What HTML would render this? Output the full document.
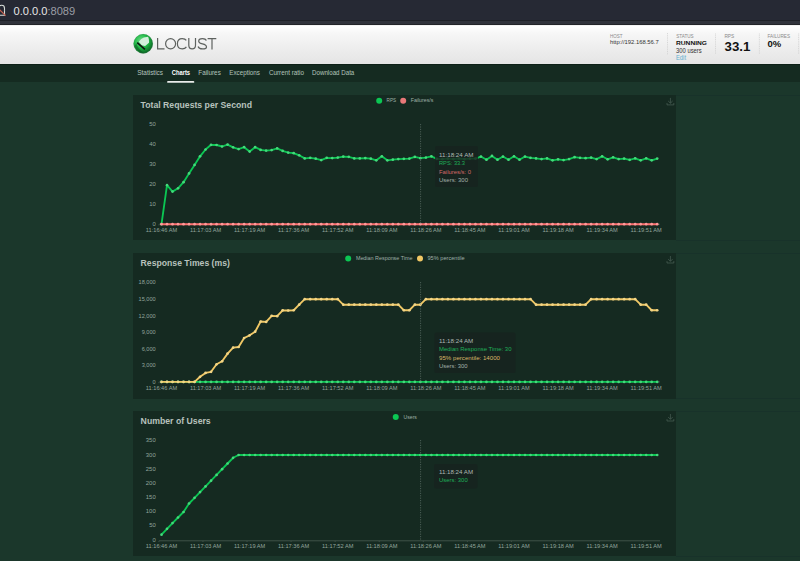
<!DOCTYPE html>
<html><head><meta charset="utf-8"><title>Locust</title><style>
*{margin:0;padding:0;box-sizing:border-box}
html,body{width:800px;height:561px;overflow:hidden;background:#1b372b;font-family:"Liberation Sans",sans-serif}
.abs{position:absolute}
#bar{left:0;top:0;width:800px;height:20px;background:#262934}
#bline{left:0;top:20px;width:800px;height:1px;background:#1f2128}
#band{left:0;top:21px;width:800px;height:3px;background:#31333c}
#bline2{left:0;top:24px;width:800px;height:1px;background:#232429}
#hdr{left:0;top:25px;width:800px;height:39px;background:linear-gradient(#ededed 0px,#ffffff 1.5px,#f7f7f7 20%,#ebebeb 70%,#e5e5e5 100%)}
#hline{left:0;top:64px;width:800px;height:1px;background:#0e2118}
#nav{left:0;top:65px;width:800px;height:17px;background:#152b21}
.panel{left:133px;width:543px;background:#152a21}
svg{position:absolute;left:0;top:0}
</style></head>
<body>
<div id="bar" class="abs"></div>
<div id="bline" class="abs"></div><div id="band" class="abs"></div><div id="bline2" class="abs"></div>
<div id="hdr" class="abs"></div>
<div id="hline" class="abs"></div>
<div id="nav" class="abs"></div>
<div class="abs panel" style="top:95px;height:145px"></div>
<div class="abs" style="left:676px;top:95px;width:124px;height:1px;background:#18322a"></div><div class="abs" style="left:676px;top:240px;width:124px;height:1px;background:#18322a"></div><div class="abs" style="left:676px;top:253px;width:124px;height:1px;background:#18322a"></div><div class="abs" style="left:676px;top:398px;width:124px;height:1px;background:#18322a"></div><div class="abs" style="left:676px;top:411px;width:124px;height:1px;background:#18322a"></div><div class="abs" style="left:676px;top:556px;width:124px;height:1px;background:#18322a"></div>
<div class="abs panel" style="top:253px;height:145.5px"></div>
<div class="abs panel" style="top:411px;height:145px"></div>
<svg width="800" height="561" viewBox="0 0 800 561" font-family="Liberation Sans, sans-serif">
 <!-- browser bar -->
 <g>
  <path d="M-1.3 8.2 a2.9 2.9 0 0 1 5.8 0 v2.6" stroke="#d6dcd8" stroke-width="1.1" fill="none"/>
  <path d="M4.5 10.5 V15.3 H-1" stroke="#d6dcd8" stroke-width="1.1" fill="none"/>
  <path d="M-0.5 9.6 L5.6 15.6" stroke="#c9604f" stroke-width="1.2"/>
  <text x="13.5" y="14.8" font-size="11.1" fill="#e6e6e6">0.0.0.0<tspan fill="#9a9da4">:8089</tspan></text>
 </g>
 <!-- logo -->
 <defs>
  <radialGradient id="lg" cx="0.4" cy="0.35" r="0.7">
   <stop offset="0" stop-color="#6fdc8a"/><stop offset="0.5" stop-color="#1fba45"/><stop offset="1" stop-color="#0a5a20"/>
  </radialGradient>
 </defs>
 <circle cx="143.2" cy="43.75" r="9.7" fill="url(#lg)"/>
 <circle cx="143.2" cy="43.75" r="9.45" fill="none" stroke="#3b7f55" stroke-width="0.5" stroke-opacity="0.6"/>
 <path d="M134.5 46 C136 50 139.5 52.5 143.5 53 C140 50 137.5 47.5 136.3 43.5 Z" fill="#0b4a1c" fill-opacity="0.45"/>
 <path d="M138.9 41.8 C140.5 39.8 142 38.2 143.8 37.6 L148.1 36.7 C148.9 38.5 149.2 40.6 149 42.7 L145.1 46.1 L141.7 45.2 Z" fill="#d3efdb"/>
 <path d="M137.2 42.6 L144.9 49.3" stroke="#101010" stroke-width="1.6"/>
 <g stroke="#5e625f" stroke-width="1.2" fill="none" stroke-linecap="butt">
  <path d="M157.6 38.1 V48.8 H164.5"/>
  <ellipse cx="170.6" cy="43.75" rx="5" ry="5.15"/>
  <path d="M186.3 40.4 C185.4 38.9 184 38.6 182.2 38.6 C179.1 38.6 177.4 40.9 177.4 43.8 C177.4 46.8 179.1 48.9 182.2 48.9 C184 48.9 185.5 48.3 186.4 46.9"/>
  <path d="M188.8 38.1 V45.3 C188.8 47.8 190.2 48.9 192.15 48.9 C194.1 48.9 195.5 47.8 195.5 45.3 V38.1"/>
  <path d="M206.3 40.6 C205.8 39.2 204.3 38.6 202.4 38.6 C200.1 38.6 198.7 39.7 198.7 41.2 C198.7 43.1 200.6 43.5 202.5 43.9 C204.8 44.4 206.5 45 206.5 46.9 C206.5 48.3 205 48.9 202.5 48.9 C200.3 48.9 198.6 48.2 198.1 46.5"/>
  <path d="M207.6 38.7 H216.3 M212 38.7 V49.4"/>
 </g>
 <!-- header stats -->
 <g fill="#8a8a8a" font-size="4.6">
  <text x="610" y="37.8" textLength="12.5" lengthAdjust="spacingAndGlyphs">HOST</text>
  <text x="676.2" y="37.8" textLength="17.4" lengthAdjust="spacingAndGlyphs">STATUS</text>
  <text x="724.4" y="37.8" textLength="9.8" lengthAdjust="spacingAndGlyphs">RPS</text>
  <text x="767.5" y="37.8" textLength="22.5" lengthAdjust="spacingAndGlyphs">FAILURES</text>
 </g>
 <text x="610" y="44.4" font-size="6.1" fill="#333" textLength="48.7" lengthAdjust="spacingAndGlyphs">http://192.168.56.7</text>
 <text x="676" y="45" font-size="6" font-weight="bold" fill="#111" textLength="31" lengthAdjust="spacingAndGlyphs">RUNNING</text>
 <text x="676" y="52.5" font-size="6.3" fill="#333" textLength="25.7" lengthAdjust="spacingAndGlyphs">300 users</text>
 <text x="676" y="59.5" font-size="6.3" fill="#64b0cf" textLength="10" lengthAdjust="spacingAndGlyphs">Edit</text>
 <text x="724.6" y="50.8" font-size="12.6" font-weight="bold" fill="#111" textLength="25.8" lengthAdjust="spacingAndGlyphs">33.1</text>
 <text x="767.6" y="47.2" font-size="9.1" font-weight="bold" fill="#111" textLength="13.7" lengthAdjust="spacingAndGlyphs">0%</text>
 <g stroke="#cfcfcf" stroke-width="0.8" stroke-dasharray="1 0.8">
  <line x1="667.5" y1="33" x2="667.5" y2="55"/>
  <line x1="715.5" y1="33.5" x2="715.5" y2="54"/>
  <line x1="759.4" y1="33.5" x2="759.4" y2="54"/>
  <line x1="798.6" y1="33.5" x2="798.6" y2="54"/>
 </g>
 <!-- nav -->
 <g font-size="6.35" fill="#b3c3bc">
  <text x="137.2" y="75.2" textLength="25.9" lengthAdjust="spacingAndGlyphs">Statistics</text>
  <text x="171.7" y="75.2" font-weight="bold" font-size="6.6" fill="#ffffff" textLength="18.4" lengthAdjust="spacingAndGlyphs">Charts</text>
  <text x="198.3" y="75.2" textLength="22.5" lengthAdjust="spacingAndGlyphs">Failures</text>
  <text x="229.2" y="75.2" textLength="30.8" lengthAdjust="spacingAndGlyphs">Exceptions</text>
  <text x="268.9" y="75.2" textLength="35.1" lengthAdjust="spacingAndGlyphs">Current ratio</text>
  <text x="312" y="75.2" textLength="42.3" lengthAdjust="spacingAndGlyphs">Download Data</text>
 </g>
 <rect x="167.1" y="81" width="27.2" height="1.8" rx="0.9" fill="#e9ecea"/>

 <!-- chart 1 -->
 <text x="140.5" y="108" font-size="8.3" font-weight="bold" fill="#b8c2bd" textLength="111.5" lengthAdjust="spacingAndGlyphs">Total Requests per Second</text>
 <circle cx="379.2" cy="100.7" r="3" fill="#0bc653"/>
 <text x="386.6" y="102.2" font-size="5.2" fill="#9fb0a8" textLength="9.6" lengthAdjust="spacingAndGlyphs">RPS</text>
 <circle cx="403.2" cy="100.7" r="3" fill="#e87878"/>
 <text x="410.7" y="102.2" font-size="5.2" fill="#9fb0a8" textLength="22.7" lengthAdjust="spacingAndGlyphs">Failures/s</text>
 <g font-size="5.9" fill="#93a59d">
 <text x="155.7" y="126.40" text-anchor="end">50</text><text x="155.7" y="146.30" text-anchor="end">40</text><text x="155.7" y="166.30" text-anchor="end">30</text><text x="155.7" y="186.30" text-anchor="end">20</text><text x="155.7" y="206.30" text-anchor="end">10</text><text x="155.7" y="226.30" text-anchor="end">0</text>
 <g font-size="5.65"><text x="161.50" y="231.5" text-anchor="middle">11:16:46 AM</text><text x="205.56" y="231.5" text-anchor="middle">11:17:03 AM</text><text x="249.62" y="231.5" text-anchor="middle">11:17:19 AM</text><text x="293.69" y="231.5" text-anchor="middle">11:17:36 AM</text><text x="337.75" y="231.5" text-anchor="middle">11:17:52 AM</text><text x="381.81" y="231.5" text-anchor="middle">11:18:09 AM</text><text x="425.87" y="231.5" text-anchor="middle">11:18:26 AM</text><text x="469.94" y="231.5" text-anchor="middle">11:18:45 AM</text><text x="514.00" y="231.5" text-anchor="middle">11:19:01 AM</text><text x="558.06" y="231.5" text-anchor="middle">11:19:18 AM</text><text x="602.12" y="231.5" text-anchor="middle">11:19:34 AM</text><text x="646.18" y="231.5" text-anchor="middle">11:19:51 AM</text></g>
 </g>
 <line x1="159" y1="224.2" x2="660" y2="224.2" stroke="#4d6057" stroke-width="0.75"/><g stroke="#4d6057" stroke-width="0.6"><line x1="158.90" y1="224.2" x2="158.90" y2="225.5"/><line x1="202.96" y1="224.2" x2="202.96" y2="225.5"/><line x1="247.02" y1="224.2" x2="247.02" y2="225.5"/><line x1="291.09" y1="224.2" x2="291.09" y2="225.5"/><line x1="335.15" y1="224.2" x2="335.15" y2="225.5"/><line x1="379.21" y1="224.2" x2="379.21" y2="225.5"/><line x1="423.27" y1="224.2" x2="423.27" y2="225.5"/><line x1="467.34" y1="224.2" x2="467.34" y2="225.5"/><line x1="511.40" y1="224.2" x2="511.40" y2="225.5"/><line x1="555.46" y1="224.2" x2="555.46" y2="225.5"/><line x1="599.52" y1="224.2" x2="599.52" y2="225.5"/><line x1="643.58" y1="224.2" x2="643.58" y2="225.5"/></g>
 <polyline points="161.50,224.20 167.01,185.20 172.52,191.60 178.02,188.30 183.53,182.20 189.04,173.40 194.55,164.90 200.05,156.30 205.56,149.50 211.07,144.80 216.58,145.00 222.09,146.50 227.59,144.60 233.10,147.30 238.61,149.10 244.12,147.20 249.62,151.55 255.13,147.20 260.64,149.90 266.15,150.55 271.66,150.05 277.16,148.40 282.67,150.90 288.18,152.55 293.69,153.20 299.19,155.30 304.70,158.40 310.21,157.80 315.72,158.70 321.23,160.05 326.73,157.80 332.24,158.05 337.75,157.55 343.26,156.55 348.76,156.80 354.27,158.40 359.78,158.40 365.29,158.05 370.80,158.70 376.30,160.30 381.81,156.30 387.32,160.30 392.83,159.70 398.33,159.05 403.84,158.80 409.35,158.55 414.86,156.90 420.37,158.20 425.87,157.55 431.38,156.30 436.89,158.80 442.40,159.10 447.90,158.60 453.41,159.10 458.92,158.50 464.43,159.10 469.94,158.70 475.44,158.60 480.95,156.55 486.46,159.70 491.97,155.90 497.47,159.70 502.98,156.55 508.49,159.70 514.00,156.30 519.51,159.70 525.01,156.55 530.52,157.80 536.03,158.40 541.54,159.05 547.04,158.40 552.55,160.30 558.06,159.30 563.57,160.05 569.08,159.05 574.58,157.20 580.09,157.80 585.60,158.20 591.11,157.55 596.61,159.05 602.12,156.30 607.63,159.30 613.14,157.30 618.65,159.10 624.15,158.60 629.66,159.80 635.17,158.30 640.68,160.30 646.18,158.30 651.69,160.30 657.20,158.60" fill="none" stroke="#0bc653" stroke-width="1.85" stroke-linejoin="round"/><circle cx="161.50" cy="224.20" r="1.35" fill="#45d97c"/><circle cx="167.01" cy="185.20" r="1.35" fill="#45d97c"/><circle cx="172.52" cy="191.60" r="1.35" fill="#45d97c"/><circle cx="178.02" cy="188.30" r="1.35" fill="#45d97c"/><circle cx="183.53" cy="182.20" r="1.35" fill="#45d97c"/><circle cx="189.04" cy="173.40" r="1.35" fill="#45d97c"/><circle cx="194.55" cy="164.90" r="1.35" fill="#45d97c"/><circle cx="200.05" cy="156.30" r="1.35" fill="#45d97c"/><circle cx="205.56" cy="149.50" r="1.35" fill="#45d97c"/><circle cx="211.07" cy="144.80" r="1.35" fill="#45d97c"/><circle cx="216.58" cy="145.00" r="1.35" fill="#45d97c"/><circle cx="222.09" cy="146.50" r="1.35" fill="#45d97c"/><circle cx="227.59" cy="144.60" r="1.35" fill="#45d97c"/><circle cx="233.10" cy="147.30" r="1.35" fill="#45d97c"/><circle cx="238.61" cy="149.10" r="1.35" fill="#45d97c"/><circle cx="244.12" cy="147.20" r="1.35" fill="#45d97c"/><circle cx="249.62" cy="151.55" r="1.35" fill="#45d97c"/><circle cx="255.13" cy="147.20" r="1.35" fill="#45d97c"/><circle cx="260.64" cy="149.90" r="1.35" fill="#45d97c"/><circle cx="266.15" cy="150.55" r="1.35" fill="#45d97c"/><circle cx="271.66" cy="150.05" r="1.35" fill="#45d97c"/><circle cx="277.16" cy="148.40" r="1.35" fill="#45d97c"/><circle cx="282.67" cy="150.90" r="1.35" fill="#45d97c"/><circle cx="288.18" cy="152.55" r="1.35" fill="#45d97c"/><circle cx="293.69" cy="153.20" r="1.35" fill="#45d97c"/><circle cx="299.19" cy="155.30" r="1.35" fill="#45d97c"/><circle cx="304.70" cy="158.40" r="1.35" fill="#45d97c"/><circle cx="310.21" cy="157.80" r="1.35" fill="#45d97c"/><circle cx="315.72" cy="158.70" r="1.35" fill="#45d97c"/><circle cx="321.23" cy="160.05" r="1.35" fill="#45d97c"/><circle cx="326.73" cy="157.80" r="1.35" fill="#45d97c"/><circle cx="332.24" cy="158.05" r="1.35" fill="#45d97c"/><circle cx="337.75" cy="157.55" r="1.35" fill="#45d97c"/><circle cx="343.26" cy="156.55" r="1.35" fill="#45d97c"/><circle cx="348.76" cy="156.80" r="1.35" fill="#45d97c"/><circle cx="354.27" cy="158.40" r="1.35" fill="#45d97c"/><circle cx="359.78" cy="158.40" r="1.35" fill="#45d97c"/><circle cx="365.29" cy="158.05" r="1.35" fill="#45d97c"/><circle cx="370.80" cy="158.70" r="1.35" fill="#45d97c"/><circle cx="376.30" cy="160.30" r="1.35" fill="#45d97c"/><circle cx="381.81" cy="156.30" r="1.35" fill="#45d97c"/><circle cx="387.32" cy="160.30" r="1.35" fill="#45d97c"/><circle cx="392.83" cy="159.70" r="1.35" fill="#45d97c"/><circle cx="398.33" cy="159.05" r="1.35" fill="#45d97c"/><circle cx="403.84" cy="158.80" r="1.35" fill="#45d97c"/><circle cx="409.35" cy="158.55" r="1.35" fill="#45d97c"/><circle cx="414.86" cy="156.90" r="1.35" fill="#45d97c"/><circle cx="420.37" cy="158.20" r="1.35" fill="#45d97c"/><circle cx="425.87" cy="157.55" r="1.35" fill="#45d97c"/><circle cx="431.38" cy="156.30" r="1.35" fill="#45d97c"/><circle cx="436.89" cy="158.80" r="1.35" fill="#45d97c"/><circle cx="442.40" cy="159.10" r="1.35" fill="#45d97c"/><circle cx="447.90" cy="158.60" r="1.35" fill="#45d97c"/><circle cx="453.41" cy="159.10" r="1.35" fill="#45d97c"/><circle cx="458.92" cy="158.50" r="1.35" fill="#45d97c"/><circle cx="464.43" cy="159.10" r="1.35" fill="#45d97c"/><circle cx="469.94" cy="158.70" r="1.35" fill="#45d97c"/><circle cx="475.44" cy="158.60" r="1.35" fill="#45d97c"/><circle cx="480.95" cy="156.55" r="1.35" fill="#45d97c"/><circle cx="486.46" cy="159.70" r="1.35" fill="#45d97c"/><circle cx="491.97" cy="155.90" r="1.35" fill="#45d97c"/><circle cx="497.47" cy="159.70" r="1.35" fill="#45d97c"/><circle cx="502.98" cy="156.55" r="1.35" fill="#45d97c"/><circle cx="508.49" cy="159.70" r="1.35" fill="#45d97c"/><circle cx="514.00" cy="156.30" r="1.35" fill="#45d97c"/><circle cx="519.51" cy="159.70" r="1.35" fill="#45d97c"/><circle cx="525.01" cy="156.55" r="1.35" fill="#45d97c"/><circle cx="530.52" cy="157.80" r="1.35" fill="#45d97c"/><circle cx="536.03" cy="158.40" r="1.35" fill="#45d97c"/><circle cx="541.54" cy="159.05" r="1.35" fill="#45d97c"/><circle cx="547.04" cy="158.40" r="1.35" fill="#45d97c"/><circle cx="552.55" cy="160.30" r="1.35" fill="#45d97c"/><circle cx="558.06" cy="159.30" r="1.35" fill="#45d97c"/><circle cx="563.57" cy="160.05" r="1.35" fill="#45d97c"/><circle cx="569.08" cy="159.05" r="1.35" fill="#45d97c"/><circle cx="574.58" cy="157.20" r="1.35" fill="#45d97c"/><circle cx="580.09" cy="157.80" r="1.35" fill="#45d97c"/><circle cx="585.60" cy="158.20" r="1.35" fill="#45d97c"/><circle cx="591.11" cy="157.55" r="1.35" fill="#45d97c"/><circle cx="596.61" cy="159.05" r="1.35" fill="#45d97c"/><circle cx="602.12" cy="156.30" r="1.35" fill="#45d97c"/><circle cx="607.63" cy="159.30" r="1.35" fill="#45d97c"/><circle cx="613.14" cy="157.30" r="1.35" fill="#45d97c"/><circle cx="618.65" cy="159.10" r="1.35" fill="#45d97c"/><circle cx="624.15" cy="158.60" r="1.35" fill="#45d97c"/><circle cx="629.66" cy="159.80" r="1.35" fill="#45d97c"/><circle cx="635.17" cy="158.30" r="1.35" fill="#45d97c"/><circle cx="640.68" cy="160.30" r="1.35" fill="#45d97c"/><circle cx="646.18" cy="158.30" r="1.35" fill="#45d97c"/><circle cx="651.69" cy="160.30" r="1.35" fill="#45d97c"/><circle cx="657.20" cy="158.60" r="1.35" fill="#45d97c"/>
 <polyline points="161.50,224.20 167.01,224.20 172.52,224.20 178.02,224.20 183.53,224.20 189.04,224.20 194.55,224.20 200.05,224.20 205.56,224.20 211.07,224.20 216.58,224.20 222.09,224.20 227.59,224.20 233.10,224.20 238.61,224.20 244.12,224.20 249.62,224.20 255.13,224.20 260.64,224.20 266.15,224.20 271.66,224.20 277.16,224.20 282.67,224.20 288.18,224.20 293.69,224.20 299.19,224.20 304.70,224.20 310.21,224.20 315.72,224.20 321.23,224.20 326.73,224.20 332.24,224.20 337.75,224.20 343.26,224.20 348.76,224.20 354.27,224.20 359.78,224.20 365.29,224.20 370.80,224.20 376.30,224.20 381.81,224.20 387.32,224.20 392.83,224.20 398.33,224.20 403.84,224.20 409.35,224.20 414.86,224.20 420.37,224.20 425.87,224.20 431.38,224.20 436.89,224.20 442.40,224.20 447.90,224.20 453.41,224.20 458.92,224.20 464.43,224.20 469.94,224.20 475.44,224.20 480.95,224.20 486.46,224.20 491.97,224.20 497.47,224.20 502.98,224.20 508.49,224.20 514.00,224.20 519.51,224.20 525.01,224.20 530.52,224.20 536.03,224.20 541.54,224.20 547.04,224.20 552.55,224.20 558.06,224.20 563.57,224.20 569.08,224.20 574.58,224.20 580.09,224.20 585.60,224.20 591.11,224.20 596.61,224.20 602.12,224.20 607.63,224.20 613.14,224.20 618.65,224.20 624.15,224.20 629.66,224.20 635.17,224.20 640.68,224.20 646.18,224.20 651.69,224.20 657.20,224.20" fill="none" stroke="#ff6d6d" stroke-width="1.85" stroke-linejoin="round"/><circle cx="161.50" cy="224.20" r="1.35" fill="#ff9a9a"/><circle cx="167.01" cy="224.20" r="1.35" fill="#ff9a9a"/><circle cx="172.52" cy="224.20" r="1.35" fill="#ff9a9a"/><circle cx="178.02" cy="224.20" r="1.35" fill="#ff9a9a"/><circle cx="183.53" cy="224.20" r="1.35" fill="#ff9a9a"/><circle cx="189.04" cy="224.20" r="1.35" fill="#ff9a9a"/><circle cx="194.55" cy="224.20" r="1.35" fill="#ff9a9a"/><circle cx="200.05" cy="224.20" r="1.35" fill="#ff9a9a"/><circle cx="205.56" cy="224.20" r="1.35" fill="#ff9a9a"/><circle cx="211.07" cy="224.20" r="1.35" fill="#ff9a9a"/><circle cx="216.58" cy="224.20" r="1.35" fill="#ff9a9a"/><circle cx="222.09" cy="224.20" r="1.35" fill="#ff9a9a"/><circle cx="227.59" cy="224.20" r="1.35" fill="#ff9a9a"/><circle cx="233.10" cy="224.20" r="1.35" fill="#ff9a9a"/><circle cx="238.61" cy="224.20" r="1.35" fill="#ff9a9a"/><circle cx="244.12" cy="224.20" r="1.35" fill="#ff9a9a"/><circle cx="249.62" cy="224.20" r="1.35" fill="#ff9a9a"/><circle cx="255.13" cy="224.20" r="1.35" fill="#ff9a9a"/><circle cx="260.64" cy="224.20" r="1.35" fill="#ff9a9a"/><circle cx="266.15" cy="224.20" r="1.35" fill="#ff9a9a"/><circle cx="271.66" cy="224.20" r="1.35" fill="#ff9a9a"/><circle cx="277.16" cy="224.20" r="1.35" fill="#ff9a9a"/><circle cx="282.67" cy="224.20" r="1.35" fill="#ff9a9a"/><circle cx="288.18" cy="224.20" r="1.35" fill="#ff9a9a"/><circle cx="293.69" cy="224.20" r="1.35" fill="#ff9a9a"/><circle cx="299.19" cy="224.20" r="1.35" fill="#ff9a9a"/><circle cx="304.70" cy="224.20" r="1.35" fill="#ff9a9a"/><circle cx="310.21" cy="224.20" r="1.35" fill="#ff9a9a"/><circle cx="315.72" cy="224.20" r="1.35" fill="#ff9a9a"/><circle cx="321.23" cy="224.20" r="1.35" fill="#ff9a9a"/><circle cx="326.73" cy="224.20" r="1.35" fill="#ff9a9a"/><circle cx="332.24" cy="224.20" r="1.35" fill="#ff9a9a"/><circle cx="337.75" cy="224.20" r="1.35" fill="#ff9a9a"/><circle cx="343.26" cy="224.20" r="1.35" fill="#ff9a9a"/><circle cx="348.76" cy="224.20" r="1.35" fill="#ff9a9a"/><circle cx="354.27" cy="224.20" r="1.35" fill="#ff9a9a"/><circle cx="359.78" cy="224.20" r="1.35" fill="#ff9a9a"/><circle cx="365.29" cy="224.20" r="1.35" fill="#ff9a9a"/><circle cx="370.80" cy="224.20" r="1.35" fill="#ff9a9a"/><circle cx="376.30" cy="224.20" r="1.35" fill="#ff9a9a"/><circle cx="381.81" cy="224.20" r="1.35" fill="#ff9a9a"/><circle cx="387.32" cy="224.20" r="1.35" fill="#ff9a9a"/><circle cx="392.83" cy="224.20" r="1.35" fill="#ff9a9a"/><circle cx="398.33" cy="224.20" r="1.35" fill="#ff9a9a"/><circle cx="403.84" cy="224.20" r="1.35" fill="#ff9a9a"/><circle cx="409.35" cy="224.20" r="1.35" fill="#ff9a9a"/><circle cx="414.86" cy="224.20" r="1.35" fill="#ff9a9a"/><circle cx="420.37" cy="224.20" r="1.35" fill="#ff9a9a"/><circle cx="425.87" cy="224.20" r="1.35" fill="#ff9a9a"/><circle cx="431.38" cy="224.20" r="1.35" fill="#ff9a9a"/><circle cx="436.89" cy="224.20" r="1.35" fill="#ff9a9a"/><circle cx="442.40" cy="224.20" r="1.35" fill="#ff9a9a"/><circle cx="447.90" cy="224.20" r="1.35" fill="#ff9a9a"/><circle cx="453.41" cy="224.20" r="1.35" fill="#ff9a9a"/><circle cx="458.92" cy="224.20" r="1.35" fill="#ff9a9a"/><circle cx="464.43" cy="224.20" r="1.35" fill="#ff9a9a"/><circle cx="469.94" cy="224.20" r="1.35" fill="#ff9a9a"/><circle cx="475.44" cy="224.20" r="1.35" fill="#ff9a9a"/><circle cx="480.95" cy="224.20" r="1.35" fill="#ff9a9a"/><circle cx="486.46" cy="224.20" r="1.35" fill="#ff9a9a"/><circle cx="491.97" cy="224.20" r="1.35" fill="#ff9a9a"/><circle cx="497.47" cy="224.20" r="1.35" fill="#ff9a9a"/><circle cx="502.98" cy="224.20" r="1.35" fill="#ff9a9a"/><circle cx="508.49" cy="224.20" r="1.35" fill="#ff9a9a"/><circle cx="514.00" cy="224.20" r="1.35" fill="#ff9a9a"/><circle cx="519.51" cy="224.20" r="1.35" fill="#ff9a9a"/><circle cx="525.01" cy="224.20" r="1.35" fill="#ff9a9a"/><circle cx="530.52" cy="224.20" r="1.35" fill="#ff9a9a"/><circle cx="536.03" cy="224.20" r="1.35" fill="#ff9a9a"/><circle cx="541.54" cy="224.20" r="1.35" fill="#ff9a9a"/><circle cx="547.04" cy="224.20" r="1.35" fill="#ff9a9a"/><circle cx="552.55" cy="224.20" r="1.35" fill="#ff9a9a"/><circle cx="558.06" cy="224.20" r="1.35" fill="#ff9a9a"/><circle cx="563.57" cy="224.20" r="1.35" fill="#ff9a9a"/><circle cx="569.08" cy="224.20" r="1.35" fill="#ff9a9a"/><circle cx="574.58" cy="224.20" r="1.35" fill="#ff9a9a"/><circle cx="580.09" cy="224.20" r="1.35" fill="#ff9a9a"/><circle cx="585.60" cy="224.20" r="1.35" fill="#ff9a9a"/><circle cx="591.11" cy="224.20" r="1.35" fill="#ff9a9a"/><circle cx="596.61" cy="224.20" r="1.35" fill="#ff9a9a"/><circle cx="602.12" cy="224.20" r="1.35" fill="#ff9a9a"/><circle cx="607.63" cy="224.20" r="1.35" fill="#ff9a9a"/><circle cx="613.14" cy="224.20" r="1.35" fill="#ff9a9a"/><circle cx="618.65" cy="224.20" r="1.35" fill="#ff9a9a"/><circle cx="624.15" cy="224.20" r="1.35" fill="#ff9a9a"/><circle cx="629.66" cy="224.20" r="1.35" fill="#ff9a9a"/><circle cx="635.17" cy="224.20" r="1.35" fill="#ff9a9a"/><circle cx="640.68" cy="224.20" r="1.35" fill="#ff9a9a"/><circle cx="646.18" cy="224.20" r="1.35" fill="#ff9a9a"/><circle cx="651.69" cy="224.20" r="1.35" fill="#ff9a9a"/><circle cx="657.20" cy="224.20" r="1.35" fill="#ff9a9a"/>
 <line x1="420.6" y1="124" x2="420.6" y2="224" stroke="#6f8279" stroke-width="0.6" stroke-dasharray="1.2 1.2"/>
 <g stroke="#4c6157" stroke-width="0.7" fill="none"><path d="M670.4 97.9 V103.2 M668.1999999999999 101.0 L670.4 103.2 L672.6 101.0 M667.0 103.0 V104.9 H673.8 V103.0"/></g>
 <rect x="435" y="146" width="43" height="41" rx="2" fill="#17231e" fill-opacity="0.82"/>
 <g font-size="6">
  <text x="439" y="156.9" fill="#aeb9b4" textLength="34.5" lengthAdjust="spacingAndGlyphs">11:18:24 AM</text>
  <text x="439" y="165.2" fill="#1fae58" textLength="26" lengthAdjust="spacingAndGlyphs">RPS: 33.3</text>
  <text x="439" y="173.6" fill="#d46a6a" textLength="32" lengthAdjust="spacingAndGlyphs">Failures/s: 0</text>
  <text x="439" y="182" fill="#a3b1aa" textLength="29" lengthAdjust="spacingAndGlyphs">Users: 300</text>
 </g>

 <!-- chart 2 -->
 <text x="140.6" y="266" font-size="8.3" font-weight="bold" fill="#b8c2bd" textLength="89.3" lengthAdjust="spacingAndGlyphs">Response Times (ms)</text>
 <circle cx="348.2" cy="258.5" r="3" fill="#0bc653"/>
 <text x="355.9" y="260.4" font-size="5.3" fill="#9fb0a8" textLength="56.6" lengthAdjust="spacingAndGlyphs">Median Response Time</text>
 <circle cx="420" cy="258.5" r="3" fill="#f0c865"/>
 <text x="427.5" y="260.4" font-size="5.4" fill="#9fb0a8" textLength="37.1" lengthAdjust="spacingAndGlyphs">95% percentile</text>
 <g font-size="5.6" fill="#93a59d">
 <text x="155.7" y="284.20" text-anchor="end">18,000</text><text x="155.7" y="301.20" text-anchor="end">15,000</text><text x="155.7" y="317.80" text-anchor="end">12,000</text><text x="155.7" y="334.30" text-anchor="end">9,000</text><text x="155.7" y="350.70" text-anchor="end">6,000</text><text x="155.7" y="367.20" text-anchor="end">3,000</text><text x="155.7" y="384.10" text-anchor="end">0</text>
 <g font-size="5.65"><text x="161.50" y="389.8" text-anchor="middle">11:16:46 AM</text><text x="205.56" y="389.8" text-anchor="middle">11:17:03 AM</text><text x="249.62" y="389.8" text-anchor="middle">11:17:19 AM</text><text x="293.69" y="389.8" text-anchor="middle">11:17:36 AM</text><text x="337.75" y="389.8" text-anchor="middle">11:17:52 AM</text><text x="381.81" y="389.8" text-anchor="middle">11:18:09 AM</text><text x="425.87" y="389.8" text-anchor="middle">11:18:26 AM</text><text x="469.94" y="389.8" text-anchor="middle">11:18:45 AM</text><text x="514.00" y="389.8" text-anchor="middle">11:19:01 AM</text><text x="558.06" y="389.8" text-anchor="middle">11:19:18 AM</text><text x="602.12" y="389.8" text-anchor="middle">11:19:34 AM</text><text x="646.18" y="389.8" text-anchor="middle">11:19:51 AM</text></g>
 </g>
 <line x1="159" y1="381.9" x2="660" y2="381.9" stroke="#4d6057" stroke-width="0.75"/><g stroke="#4d6057" stroke-width="0.6"><line x1="158.90" y1="381.9" x2="158.90" y2="383.2"/><line x1="202.96" y1="381.9" x2="202.96" y2="383.2"/><line x1="247.02" y1="381.9" x2="247.02" y2="383.2"/><line x1="291.09" y1="381.9" x2="291.09" y2="383.2"/><line x1="335.15" y1="381.9" x2="335.15" y2="383.2"/><line x1="379.21" y1="381.9" x2="379.21" y2="383.2"/><line x1="423.27" y1="381.9" x2="423.27" y2="383.2"/><line x1="467.34" y1="381.9" x2="467.34" y2="383.2"/><line x1="511.40" y1="381.9" x2="511.40" y2="383.2"/><line x1="555.46" y1="381.9" x2="555.46" y2="383.2"/><line x1="599.52" y1="381.9" x2="599.52" y2="383.2"/><line x1="643.58" y1="381.9" x2="643.58" y2="383.2"/></g>
 <polyline points="161.50,381.90 167.01,381.90 172.52,381.90 178.02,381.90 183.53,381.90 189.04,381.90 194.55,381.90 200.05,381.90 205.56,381.90 211.07,381.90 216.58,381.90 222.09,381.90 227.59,381.90 233.10,381.90 238.61,381.90 244.12,381.90 249.62,381.90 255.13,381.90 260.64,381.90 266.15,381.90 271.66,381.90 277.16,381.90 282.67,381.90 288.18,381.90 293.69,381.90 299.19,381.90 304.70,381.90 310.21,381.90 315.72,381.90 321.23,381.90 326.73,381.90 332.24,381.90 337.75,381.90 343.26,381.90 348.76,381.90 354.27,381.90 359.78,381.90 365.29,381.90 370.80,381.90 376.30,381.90 381.81,381.90 387.32,381.90 392.83,381.90 398.33,381.90 403.84,381.90 409.35,381.90 414.86,381.90 420.37,381.90 425.87,381.90 431.38,381.90 436.89,381.90 442.40,381.90 447.90,381.90 453.41,381.90 458.92,381.90 464.43,381.90 469.94,381.90 475.44,381.90 480.95,381.90 486.46,381.90 491.97,381.90 497.47,381.90 502.98,381.90 508.49,381.90 514.00,381.90 519.51,381.90 525.01,381.90 530.52,381.90 536.03,381.90 541.54,381.90 547.04,381.90 552.55,381.90 558.06,381.90 563.57,381.90 569.08,381.90 574.58,381.90 580.09,381.90 585.60,381.90 591.11,381.90 596.61,381.90 602.12,381.90 607.63,381.90 613.14,381.90 618.65,381.90 624.15,381.90 629.66,381.90 635.17,381.90 640.68,381.90 646.18,381.90 651.69,381.90 657.20,381.90" fill="none" stroke="#0bc653" stroke-width="1.85" stroke-linejoin="round"/><circle cx="161.50" cy="381.90" r="1.35" fill="#45d97c"/><circle cx="167.01" cy="381.90" r="1.35" fill="#45d97c"/><circle cx="172.52" cy="381.90" r="1.35" fill="#45d97c"/><circle cx="178.02" cy="381.90" r="1.35" fill="#45d97c"/><circle cx="183.53" cy="381.90" r="1.35" fill="#45d97c"/><circle cx="189.04" cy="381.90" r="1.35" fill="#45d97c"/><circle cx="194.55" cy="381.90" r="1.35" fill="#45d97c"/><circle cx="200.05" cy="381.90" r="1.35" fill="#45d97c"/><circle cx="205.56" cy="381.90" r="1.35" fill="#45d97c"/><circle cx="211.07" cy="381.90" r="1.35" fill="#45d97c"/><circle cx="216.58" cy="381.90" r="1.35" fill="#45d97c"/><circle cx="222.09" cy="381.90" r="1.35" fill="#45d97c"/><circle cx="227.59" cy="381.90" r="1.35" fill="#45d97c"/><circle cx="233.10" cy="381.90" r="1.35" fill="#45d97c"/><circle cx="238.61" cy="381.90" r="1.35" fill="#45d97c"/><circle cx="244.12" cy="381.90" r="1.35" fill="#45d97c"/><circle cx="249.62" cy="381.90" r="1.35" fill="#45d97c"/><circle cx="255.13" cy="381.90" r="1.35" fill="#45d97c"/><circle cx="260.64" cy="381.90" r="1.35" fill="#45d97c"/><circle cx="266.15" cy="381.90" r="1.35" fill="#45d97c"/><circle cx="271.66" cy="381.90" r="1.35" fill="#45d97c"/><circle cx="277.16" cy="381.90" r="1.35" fill="#45d97c"/><circle cx="282.67" cy="381.90" r="1.35" fill="#45d97c"/><circle cx="288.18" cy="381.90" r="1.35" fill="#45d97c"/><circle cx="293.69" cy="381.90" r="1.35" fill="#45d97c"/><circle cx="299.19" cy="381.90" r="1.35" fill="#45d97c"/><circle cx="304.70" cy="381.90" r="1.35" fill="#45d97c"/><circle cx="310.21" cy="381.90" r="1.35" fill="#45d97c"/><circle cx="315.72" cy="381.90" r="1.35" fill="#45d97c"/><circle cx="321.23" cy="381.90" r="1.35" fill="#45d97c"/><circle cx="326.73" cy="381.90" r="1.35" fill="#45d97c"/><circle cx="332.24" cy="381.90" r="1.35" fill="#45d97c"/><circle cx="337.75" cy="381.90" r="1.35" fill="#45d97c"/><circle cx="343.26" cy="381.90" r="1.35" fill="#45d97c"/><circle cx="348.76" cy="381.90" r="1.35" fill="#45d97c"/><circle cx="354.27" cy="381.90" r="1.35" fill="#45d97c"/><circle cx="359.78" cy="381.90" r="1.35" fill="#45d97c"/><circle cx="365.29" cy="381.90" r="1.35" fill="#45d97c"/><circle cx="370.80" cy="381.90" r="1.35" fill="#45d97c"/><circle cx="376.30" cy="381.90" r="1.35" fill="#45d97c"/><circle cx="381.81" cy="381.90" r="1.35" fill="#45d97c"/><circle cx="387.32" cy="381.90" r="1.35" fill="#45d97c"/><circle cx="392.83" cy="381.90" r="1.35" fill="#45d97c"/><circle cx="398.33" cy="381.90" r="1.35" fill="#45d97c"/><circle cx="403.84" cy="381.90" r="1.35" fill="#45d97c"/><circle cx="409.35" cy="381.90" r="1.35" fill="#45d97c"/><circle cx="414.86" cy="381.90" r="1.35" fill="#45d97c"/><circle cx="420.37" cy="381.90" r="1.35" fill="#45d97c"/><circle cx="425.87" cy="381.90" r="1.35" fill="#45d97c"/><circle cx="431.38" cy="381.90" r="1.35" fill="#45d97c"/><circle cx="436.89" cy="381.90" r="1.35" fill="#45d97c"/><circle cx="442.40" cy="381.90" r="1.35" fill="#45d97c"/><circle cx="447.90" cy="381.90" r="1.35" fill="#45d97c"/><circle cx="453.41" cy="381.90" r="1.35" fill="#45d97c"/><circle cx="458.92" cy="381.90" r="1.35" fill="#45d97c"/><circle cx="464.43" cy="381.90" r="1.35" fill="#45d97c"/><circle cx="469.94" cy="381.90" r="1.35" fill="#45d97c"/><circle cx="475.44" cy="381.90" r="1.35" fill="#45d97c"/><circle cx="480.95" cy="381.90" r="1.35" fill="#45d97c"/><circle cx="486.46" cy="381.90" r="1.35" fill="#45d97c"/><circle cx="491.97" cy="381.90" r="1.35" fill="#45d97c"/><circle cx="497.47" cy="381.90" r="1.35" fill="#45d97c"/><circle cx="502.98" cy="381.90" r="1.35" fill="#45d97c"/><circle cx="508.49" cy="381.90" r="1.35" fill="#45d97c"/><circle cx="514.00" cy="381.90" r="1.35" fill="#45d97c"/><circle cx="519.51" cy="381.90" r="1.35" fill="#45d97c"/><circle cx="525.01" cy="381.90" r="1.35" fill="#45d97c"/><circle cx="530.52" cy="381.90" r="1.35" fill="#45d97c"/><circle cx="536.03" cy="381.90" r="1.35" fill="#45d97c"/><circle cx="541.54" cy="381.90" r="1.35" fill="#45d97c"/><circle cx="547.04" cy="381.90" r="1.35" fill="#45d97c"/><circle cx="552.55" cy="381.90" r="1.35" fill="#45d97c"/><circle cx="558.06" cy="381.90" r="1.35" fill="#45d97c"/><circle cx="563.57" cy="381.90" r="1.35" fill="#45d97c"/><circle cx="569.08" cy="381.90" r="1.35" fill="#45d97c"/><circle cx="574.58" cy="381.90" r="1.35" fill="#45d97c"/><circle cx="580.09" cy="381.90" r="1.35" fill="#45d97c"/><circle cx="585.60" cy="381.90" r="1.35" fill="#45d97c"/><circle cx="591.11" cy="381.90" r="1.35" fill="#45d97c"/><circle cx="596.61" cy="381.90" r="1.35" fill="#45d97c"/><circle cx="602.12" cy="381.90" r="1.35" fill="#45d97c"/><circle cx="607.63" cy="381.90" r="1.35" fill="#45d97c"/><circle cx="613.14" cy="381.90" r="1.35" fill="#45d97c"/><circle cx="618.65" cy="381.90" r="1.35" fill="#45d97c"/><circle cx="624.15" cy="381.90" r="1.35" fill="#45d97c"/><circle cx="629.66" cy="381.90" r="1.35" fill="#45d97c"/><circle cx="635.17" cy="381.90" r="1.35" fill="#45d97c"/><circle cx="640.68" cy="381.90" r="1.35" fill="#45d97c"/><circle cx="646.18" cy="381.90" r="1.35" fill="#45d97c"/><circle cx="651.69" cy="381.90" r="1.35" fill="#45d97c"/><circle cx="657.20" cy="381.90" r="1.35" fill="#45d97c"/>
 <polyline points="161.50,381.90 167.01,381.90 172.52,381.90 178.02,381.90 183.53,381.90 189.04,381.90 194.55,381.90 200.05,376.80 205.56,372.90 211.07,371.80 216.58,364.30 222.09,361.30 227.59,353.60 233.10,347.70 238.61,347.00 244.12,338.00 249.62,335.30 255.13,331.70 260.64,321.50 266.15,321.90 271.66,315.80 277.16,316.20 282.67,310.30 288.18,310.50 293.69,310.23 299.19,304.72 304.70,299.20 310.21,299.20 315.72,299.20 321.23,299.20 326.73,299.20 332.24,299.20 337.75,299.20 343.26,304.72 348.76,304.72 354.27,304.72 359.78,304.72 365.29,304.72 370.80,304.72 376.30,304.72 381.81,304.72 387.32,304.72 392.83,304.72 398.33,304.72 403.84,310.23 409.35,310.23 414.86,304.72 420.37,304.72 425.87,299.20 431.38,299.20 436.89,299.20 442.40,299.20 447.90,299.20 453.41,299.20 458.92,299.20 464.43,299.20 469.94,299.20 475.44,299.20 480.95,299.20 486.46,299.20 491.97,299.20 497.47,299.20 502.98,299.20 508.49,299.20 514.00,299.20 519.51,299.20 525.01,299.20 530.52,299.20 536.03,304.72 541.54,304.72 547.04,304.72 552.55,304.72 558.06,304.72 563.57,304.72 569.08,304.72 574.58,304.72 580.09,304.72 585.60,304.72 591.11,299.20 596.61,299.20 602.12,299.20 607.63,299.20 613.14,299.20 618.65,299.20 624.15,299.20 629.66,299.20 635.17,299.20 640.68,304.72 646.18,304.72 651.69,310.23 657.20,310.23" fill="none" stroke="#f0c865" stroke-width="1.85" stroke-linejoin="round"/><circle cx="161.50" cy="381.90" r="1.35" fill="#f2d587"/><circle cx="167.01" cy="381.90" r="1.35" fill="#f2d587"/><circle cx="172.52" cy="381.90" r="1.35" fill="#f2d587"/><circle cx="178.02" cy="381.90" r="1.35" fill="#f2d587"/><circle cx="183.53" cy="381.90" r="1.35" fill="#f2d587"/><circle cx="189.04" cy="381.90" r="1.35" fill="#f2d587"/><circle cx="194.55" cy="381.90" r="1.35" fill="#f2d587"/><circle cx="200.05" cy="376.80" r="1.35" fill="#f2d587"/><circle cx="205.56" cy="372.90" r="1.35" fill="#f2d587"/><circle cx="211.07" cy="371.80" r="1.35" fill="#f2d587"/><circle cx="216.58" cy="364.30" r="1.35" fill="#f2d587"/><circle cx="222.09" cy="361.30" r="1.35" fill="#f2d587"/><circle cx="227.59" cy="353.60" r="1.35" fill="#f2d587"/><circle cx="233.10" cy="347.70" r="1.35" fill="#f2d587"/><circle cx="238.61" cy="347.00" r="1.35" fill="#f2d587"/><circle cx="244.12" cy="338.00" r="1.35" fill="#f2d587"/><circle cx="249.62" cy="335.30" r="1.35" fill="#f2d587"/><circle cx="255.13" cy="331.70" r="1.35" fill="#f2d587"/><circle cx="260.64" cy="321.50" r="1.35" fill="#f2d587"/><circle cx="266.15" cy="321.90" r="1.35" fill="#f2d587"/><circle cx="271.66" cy="315.80" r="1.35" fill="#f2d587"/><circle cx="277.16" cy="316.20" r="1.35" fill="#f2d587"/><circle cx="282.67" cy="310.30" r="1.35" fill="#f2d587"/><circle cx="288.18" cy="310.50" r="1.35" fill="#f2d587"/><circle cx="293.69" cy="310.23" r="1.35" fill="#f2d587"/><circle cx="299.19" cy="304.72" r="1.35" fill="#f2d587"/><circle cx="304.70" cy="299.20" r="1.35" fill="#f2d587"/><circle cx="310.21" cy="299.20" r="1.35" fill="#f2d587"/><circle cx="315.72" cy="299.20" r="1.35" fill="#f2d587"/><circle cx="321.23" cy="299.20" r="1.35" fill="#f2d587"/><circle cx="326.73" cy="299.20" r="1.35" fill="#f2d587"/><circle cx="332.24" cy="299.20" r="1.35" fill="#f2d587"/><circle cx="337.75" cy="299.20" r="1.35" fill="#f2d587"/><circle cx="343.26" cy="304.72" r="1.35" fill="#f2d587"/><circle cx="348.76" cy="304.72" r="1.35" fill="#f2d587"/><circle cx="354.27" cy="304.72" r="1.35" fill="#f2d587"/><circle cx="359.78" cy="304.72" r="1.35" fill="#f2d587"/><circle cx="365.29" cy="304.72" r="1.35" fill="#f2d587"/><circle cx="370.80" cy="304.72" r="1.35" fill="#f2d587"/><circle cx="376.30" cy="304.72" r="1.35" fill="#f2d587"/><circle cx="381.81" cy="304.72" r="1.35" fill="#f2d587"/><circle cx="387.32" cy="304.72" r="1.35" fill="#f2d587"/><circle cx="392.83" cy="304.72" r="1.35" fill="#f2d587"/><circle cx="398.33" cy="304.72" r="1.35" fill="#f2d587"/><circle cx="403.84" cy="310.23" r="1.35" fill="#f2d587"/><circle cx="409.35" cy="310.23" r="1.35" fill="#f2d587"/><circle cx="414.86" cy="304.72" r="1.35" fill="#f2d587"/><circle cx="420.37" cy="304.72" r="1.35" fill="#f2d587"/><circle cx="425.87" cy="299.20" r="1.35" fill="#f2d587"/><circle cx="431.38" cy="299.20" r="1.35" fill="#f2d587"/><circle cx="436.89" cy="299.20" r="1.35" fill="#f2d587"/><circle cx="442.40" cy="299.20" r="1.35" fill="#f2d587"/><circle cx="447.90" cy="299.20" r="1.35" fill="#f2d587"/><circle cx="453.41" cy="299.20" r="1.35" fill="#f2d587"/><circle cx="458.92" cy="299.20" r="1.35" fill="#f2d587"/><circle cx="464.43" cy="299.20" r="1.35" fill="#f2d587"/><circle cx="469.94" cy="299.20" r="1.35" fill="#f2d587"/><circle cx="475.44" cy="299.20" r="1.35" fill="#f2d587"/><circle cx="480.95" cy="299.20" r="1.35" fill="#f2d587"/><circle cx="486.46" cy="299.20" r="1.35" fill="#f2d587"/><circle cx="491.97" cy="299.20" r="1.35" fill="#f2d587"/><circle cx="497.47" cy="299.20" r="1.35" fill="#f2d587"/><circle cx="502.98" cy="299.20" r="1.35" fill="#f2d587"/><circle cx="508.49" cy="299.20" r="1.35" fill="#f2d587"/><circle cx="514.00" cy="299.20" r="1.35" fill="#f2d587"/><circle cx="519.51" cy="299.20" r="1.35" fill="#f2d587"/><circle cx="525.01" cy="299.20" r="1.35" fill="#f2d587"/><circle cx="530.52" cy="299.20" r="1.35" fill="#f2d587"/><circle cx="536.03" cy="304.72" r="1.35" fill="#f2d587"/><circle cx="541.54" cy="304.72" r="1.35" fill="#f2d587"/><circle cx="547.04" cy="304.72" r="1.35" fill="#f2d587"/><circle cx="552.55" cy="304.72" r="1.35" fill="#f2d587"/><circle cx="558.06" cy="304.72" r="1.35" fill="#f2d587"/><circle cx="563.57" cy="304.72" r="1.35" fill="#f2d587"/><circle cx="569.08" cy="304.72" r="1.35" fill="#f2d587"/><circle cx="574.58" cy="304.72" r="1.35" fill="#f2d587"/><circle cx="580.09" cy="304.72" r="1.35" fill="#f2d587"/><circle cx="585.60" cy="304.72" r="1.35" fill="#f2d587"/><circle cx="591.11" cy="299.20" r="1.35" fill="#f2d587"/><circle cx="596.61" cy="299.20" r="1.35" fill="#f2d587"/><circle cx="602.12" cy="299.20" r="1.35" fill="#f2d587"/><circle cx="607.63" cy="299.20" r="1.35" fill="#f2d587"/><circle cx="613.14" cy="299.20" r="1.35" fill="#f2d587"/><circle cx="618.65" cy="299.20" r="1.35" fill="#f2d587"/><circle cx="624.15" cy="299.20" r="1.35" fill="#f2d587"/><circle cx="629.66" cy="299.20" r="1.35" fill="#f2d587"/><circle cx="635.17" cy="299.20" r="1.35" fill="#f2d587"/><circle cx="640.68" cy="304.72" r="1.35" fill="#f2d587"/><circle cx="646.18" cy="304.72" r="1.35" fill="#f2d587"/><circle cx="651.69" cy="310.23" r="1.35" fill="#f2d587"/><circle cx="657.20" cy="310.23" r="1.35" fill="#f2d587"/>
 <line x1="420.6" y1="282" x2="420.6" y2="382" stroke="#6f8279" stroke-width="0.6" stroke-dasharray="1.2 1.2"/>
 <g stroke="#4c6157" stroke-width="0.7" fill="none"><path d="M670.4 256 V261.3 M668.1999999999999 259.1 L670.4 261.3 L672.6 259.1 M667.0 261.1 V263 H673.8 V261.1"/></g>
 <rect x="434.4" y="332.5" width="81.2" height="40.6" rx="2" fill="#17231e" fill-opacity="0.82"/>
 <g font-size="6">
  <text x="439" y="342.9" fill="#aeb9b4" textLength="34.2" lengthAdjust="spacingAndGlyphs">11:18:24 AM</text>
  <text x="439" y="351.2" fill="#1fae58" textLength="72.5" lengthAdjust="spacingAndGlyphs">Median Response Time: 30</text>
  <text x="439" y="359.6" fill="#d9b868" textLength="61" lengthAdjust="spacingAndGlyphs">95% percentile: 14000</text>
  <text x="439" y="367.9" fill="#a3b1aa" textLength="28.5" lengthAdjust="spacingAndGlyphs">Users: 300</text>
 </g>

 <!-- chart 3 -->
 <text x="140.6" y="424.2" font-size="8.3" font-weight="bold" fill="#b8c2bd" textLength="70.1" lengthAdjust="spacingAndGlyphs">Number of Users</text>
 <circle cx="395.75" cy="417.1" r="3" fill="#0bc653"/>
 <text x="403.6" y="418.6" font-size="5.2" fill="#9fb0a8" textLength="13.3" lengthAdjust="spacingAndGlyphs">Users</text>
 <g font-size="5.9" fill="#93a59d">
 <text x="155.7" y="442.35" text-anchor="end">350</text><text x="155.7" y="456.54" text-anchor="end">300</text><text x="155.7" y="470.72" text-anchor="end">250</text><text x="155.7" y="484.91" text-anchor="end">200</text><text x="155.7" y="499.09" text-anchor="end">150</text><text x="155.7" y="513.28" text-anchor="end">100</text><text x="155.7" y="527.47" text-anchor="end">50</text><text x="155.7" y="541.65" text-anchor="end">0</text>
 <g font-size="5.65"><text x="161.50" y="548" text-anchor="middle">11:16:46 AM</text><text x="205.56" y="548" text-anchor="middle">11:17:03 AM</text><text x="249.62" y="548" text-anchor="middle">11:17:19 AM</text><text x="293.69" y="548" text-anchor="middle">11:17:36 AM</text><text x="337.75" y="548" text-anchor="middle">11:17:52 AM</text><text x="381.81" y="548" text-anchor="middle">11:18:09 AM</text><text x="425.87" y="548" text-anchor="middle">11:18:26 AM</text><text x="469.94" y="548" text-anchor="middle">11:18:45 AM</text><text x="514.00" y="548" text-anchor="middle">11:19:01 AM</text><text x="558.06" y="548" text-anchor="middle">11:19:18 AM</text><text x="602.12" y="548" text-anchor="middle">11:19:34 AM</text><text x="646.18" y="548" text-anchor="middle">11:19:51 AM</text></g>
 </g>
 <line x1="159" y1="540.8" x2="660" y2="540.8" stroke="#4d6057" stroke-width="0.75"/><g stroke="#4d6057" stroke-width="0.6"><line x1="158.90" y1="540.8" x2="158.90" y2="542.0999999999999"/><line x1="202.96" y1="540.8" x2="202.96" y2="542.0999999999999"/><line x1="247.02" y1="540.8" x2="247.02" y2="542.0999999999999"/><line x1="291.09" y1="540.8" x2="291.09" y2="542.0999999999999"/><line x1="335.15" y1="540.8" x2="335.15" y2="542.0999999999999"/><line x1="379.21" y1="540.8" x2="379.21" y2="542.0999999999999"/><line x1="423.27" y1="540.8" x2="423.27" y2="542.0999999999999"/><line x1="467.34" y1="540.8" x2="467.34" y2="542.0999999999999"/><line x1="511.40" y1="540.8" x2="511.40" y2="542.0999999999999"/><line x1="555.46" y1="540.8" x2="555.46" y2="542.0999999999999"/><line x1="599.52" y1="540.8" x2="599.52" y2="542.0999999999999"/><line x1="643.58" y1="540.8" x2="643.58" y2="542.0999999999999"/></g>
 <polyline points="161.50,534.70 167.01,528.80 172.52,523.10 178.02,517.50 183.53,512.00 189.04,503.50 194.55,497.80 200.05,492.10 205.56,486.40 211.07,480.70 216.58,474.90 222.09,469.20 227.59,463.50 233.10,457.80 238.61,455.00 244.12,455.00 249.62,455.00 255.13,455.00 260.64,455.00 266.15,455.00 271.66,455.00 277.16,455.00 282.67,455.00 288.18,455.00 293.69,455.00 299.19,455.00 304.70,455.00 310.21,455.00 315.72,455.00 321.23,455.00 326.73,455.00 332.24,455.00 337.75,455.00 343.26,455.00 348.76,455.00 354.27,455.00 359.78,455.00 365.29,455.00 370.80,455.00 376.30,455.00 381.81,455.00 387.32,455.00 392.83,455.00 398.33,455.00 403.84,455.00 409.35,455.00 414.86,455.00 420.37,455.00 425.87,455.00 431.38,455.00 436.89,455.00 442.40,455.00 447.90,455.00 453.41,455.00 458.92,455.00 464.43,455.00 469.94,455.00 475.44,455.00 480.95,455.00 486.46,455.00 491.97,455.00 497.47,455.00 502.98,455.00 508.49,455.00 514.00,455.00 519.51,455.00 525.01,455.00 530.52,455.00 536.03,455.00 541.54,455.00 547.04,455.00 552.55,455.00 558.06,455.00 563.57,455.00 569.08,455.00 574.58,455.00 580.09,455.00 585.60,455.00 591.11,455.00 596.61,455.00 602.12,455.00 607.63,455.00 613.14,455.00 618.65,455.00 624.15,455.00 629.66,455.00 635.17,455.00 640.68,455.00 646.18,455.00 651.69,455.00 657.20,455.00" fill="none" stroke="#0bc653" stroke-width="1.85" stroke-linejoin="round"/><circle cx="161.50" cy="534.70" r="1.35" fill="#45d97c"/><circle cx="167.01" cy="528.80" r="1.35" fill="#45d97c"/><circle cx="172.52" cy="523.10" r="1.35" fill="#45d97c"/><circle cx="178.02" cy="517.50" r="1.35" fill="#45d97c"/><circle cx="183.53" cy="512.00" r="1.35" fill="#45d97c"/><circle cx="189.04" cy="503.50" r="1.35" fill="#45d97c"/><circle cx="194.55" cy="497.80" r="1.35" fill="#45d97c"/><circle cx="200.05" cy="492.10" r="1.35" fill="#45d97c"/><circle cx="205.56" cy="486.40" r="1.35" fill="#45d97c"/><circle cx="211.07" cy="480.70" r="1.35" fill="#45d97c"/><circle cx="216.58" cy="474.90" r="1.35" fill="#45d97c"/><circle cx="222.09" cy="469.20" r="1.35" fill="#45d97c"/><circle cx="227.59" cy="463.50" r="1.35" fill="#45d97c"/><circle cx="233.10" cy="457.80" r="1.35" fill="#45d97c"/><circle cx="238.61" cy="455.00" r="1.35" fill="#45d97c"/><circle cx="244.12" cy="455.00" r="1.35" fill="#45d97c"/><circle cx="249.62" cy="455.00" r="1.35" fill="#45d97c"/><circle cx="255.13" cy="455.00" r="1.35" fill="#45d97c"/><circle cx="260.64" cy="455.00" r="1.35" fill="#45d97c"/><circle cx="266.15" cy="455.00" r="1.35" fill="#45d97c"/><circle cx="271.66" cy="455.00" r="1.35" fill="#45d97c"/><circle cx="277.16" cy="455.00" r="1.35" fill="#45d97c"/><circle cx="282.67" cy="455.00" r="1.35" fill="#45d97c"/><circle cx="288.18" cy="455.00" r="1.35" fill="#45d97c"/><circle cx="293.69" cy="455.00" r="1.35" fill="#45d97c"/><circle cx="299.19" cy="455.00" r="1.35" fill="#45d97c"/><circle cx="304.70" cy="455.00" r="1.35" fill="#45d97c"/><circle cx="310.21" cy="455.00" r="1.35" fill="#45d97c"/><circle cx="315.72" cy="455.00" r="1.35" fill="#45d97c"/><circle cx="321.23" cy="455.00" r="1.35" fill="#45d97c"/><circle cx="326.73" cy="455.00" r="1.35" fill="#45d97c"/><circle cx="332.24" cy="455.00" r="1.35" fill="#45d97c"/><circle cx="337.75" cy="455.00" r="1.35" fill="#45d97c"/><circle cx="343.26" cy="455.00" r="1.35" fill="#45d97c"/><circle cx="348.76" cy="455.00" r="1.35" fill="#45d97c"/><circle cx="354.27" cy="455.00" r="1.35" fill="#45d97c"/><circle cx="359.78" cy="455.00" r="1.35" fill="#45d97c"/><circle cx="365.29" cy="455.00" r="1.35" fill="#45d97c"/><circle cx="370.80" cy="455.00" r="1.35" fill="#45d97c"/><circle cx="376.30" cy="455.00" r="1.35" fill="#45d97c"/><circle cx="381.81" cy="455.00" r="1.35" fill="#45d97c"/><circle cx="387.32" cy="455.00" r="1.35" fill="#45d97c"/><circle cx="392.83" cy="455.00" r="1.35" fill="#45d97c"/><circle cx="398.33" cy="455.00" r="1.35" fill="#45d97c"/><circle cx="403.84" cy="455.00" r="1.35" fill="#45d97c"/><circle cx="409.35" cy="455.00" r="1.35" fill="#45d97c"/><circle cx="414.86" cy="455.00" r="1.35" fill="#45d97c"/><circle cx="420.37" cy="455.00" r="1.35" fill="#45d97c"/><circle cx="425.87" cy="455.00" r="1.35" fill="#45d97c"/><circle cx="431.38" cy="455.00" r="1.35" fill="#45d97c"/><circle cx="436.89" cy="455.00" r="1.35" fill="#45d97c"/><circle cx="442.40" cy="455.00" r="1.35" fill="#45d97c"/><circle cx="447.90" cy="455.00" r="1.35" fill="#45d97c"/><circle cx="453.41" cy="455.00" r="1.35" fill="#45d97c"/><circle cx="458.92" cy="455.00" r="1.35" fill="#45d97c"/><circle cx="464.43" cy="455.00" r="1.35" fill="#45d97c"/><circle cx="469.94" cy="455.00" r="1.35" fill="#45d97c"/><circle cx="475.44" cy="455.00" r="1.35" fill="#45d97c"/><circle cx="480.95" cy="455.00" r="1.35" fill="#45d97c"/><circle cx="486.46" cy="455.00" r="1.35" fill="#45d97c"/><circle cx="491.97" cy="455.00" r="1.35" fill="#45d97c"/><circle cx="497.47" cy="455.00" r="1.35" fill="#45d97c"/><circle cx="502.98" cy="455.00" r="1.35" fill="#45d97c"/><circle cx="508.49" cy="455.00" r="1.35" fill="#45d97c"/><circle cx="514.00" cy="455.00" r="1.35" fill="#45d97c"/><circle cx="519.51" cy="455.00" r="1.35" fill="#45d97c"/><circle cx="525.01" cy="455.00" r="1.35" fill="#45d97c"/><circle cx="530.52" cy="455.00" r="1.35" fill="#45d97c"/><circle cx="536.03" cy="455.00" r="1.35" fill="#45d97c"/><circle cx="541.54" cy="455.00" r="1.35" fill="#45d97c"/><circle cx="547.04" cy="455.00" r="1.35" fill="#45d97c"/><circle cx="552.55" cy="455.00" r="1.35" fill="#45d97c"/><circle cx="558.06" cy="455.00" r="1.35" fill="#45d97c"/><circle cx="563.57" cy="455.00" r="1.35" fill="#45d97c"/><circle cx="569.08" cy="455.00" r="1.35" fill="#45d97c"/><circle cx="574.58" cy="455.00" r="1.35" fill="#45d97c"/><circle cx="580.09" cy="455.00" r="1.35" fill="#45d97c"/><circle cx="585.60" cy="455.00" r="1.35" fill="#45d97c"/><circle cx="591.11" cy="455.00" r="1.35" fill="#45d97c"/><circle cx="596.61" cy="455.00" r="1.35" fill="#45d97c"/><circle cx="602.12" cy="455.00" r="1.35" fill="#45d97c"/><circle cx="607.63" cy="455.00" r="1.35" fill="#45d97c"/><circle cx="613.14" cy="455.00" r="1.35" fill="#45d97c"/><circle cx="618.65" cy="455.00" r="1.35" fill="#45d97c"/><circle cx="624.15" cy="455.00" r="1.35" fill="#45d97c"/><circle cx="629.66" cy="455.00" r="1.35" fill="#45d97c"/><circle cx="635.17" cy="455.00" r="1.35" fill="#45d97c"/><circle cx="640.68" cy="455.00" r="1.35" fill="#45d97c"/><circle cx="646.18" cy="455.00" r="1.35" fill="#45d97c"/><circle cx="651.69" cy="455.00" r="1.35" fill="#45d97c"/><circle cx="657.20" cy="455.00" r="1.35" fill="#45d97c"/>
 <line x1="420.6" y1="440" x2="420.6" y2="540" stroke="#6f8279" stroke-width="0.6" stroke-dasharray="1.2 1.2"/>
 <g stroke="#4c6157" stroke-width="0.7" fill="none"><path d="M670.4 414 V419.3 M668.1999999999999 417.1 L670.4 419.3 L672.6 417.1 M667.0 419.1 V421 H673.8 V419.1"/></g>
 <rect x="434" y="464" width="43.5" height="24.5" rx="2" fill="#17231e" fill-opacity="0.82"/>
 <g font-size="6">
  <text x="439" y="473.6" fill="#aeb9b4" textLength="34" lengthAdjust="spacingAndGlyphs">11:18:24 AM</text>
  <text x="439" y="482.1" fill="#1fae58" textLength="28.7" lengthAdjust="spacingAndGlyphs">Users: 300</text>
 </g>
</svg>
</body></html>
